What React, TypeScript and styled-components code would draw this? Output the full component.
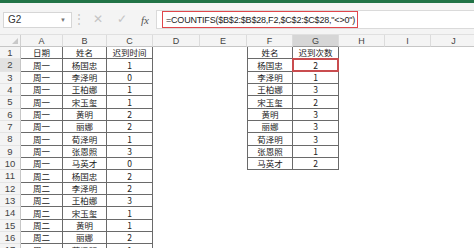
import styled, { createGlobalStyle } from "styled-components";

const GlobalStyle = createGlobalStyle`
  html, body {
    margin: 0;
    padding: 0;
    background: #ffffff;
  }
  body {
    font-family: "Noto Sans CJK SC", "Liberation Sans", sans-serif;
    overflow: hidden;
  }
`;

const Window = styled.div`
  width: 474px;
  height: 248px;
  overflow: hidden;
  display: flex;
  flex-direction: column;
  background: #ffffff;
`;

const TitleStrip = styled.div`
  height: 3px;
  flex-shrink: 0;
  background: #217346;
`;

const FormulaBar = styled.div`
  height: 32px;
  flex-shrink: 0;
  box-sizing: border-box;
  display: flex;
  align-items: center;
  padding: 2px 0 0 3px;
  background: #f4f4f4;
  border-bottom: 1px solid #e0e0e0;
`;

const NameBox = styled.div`
  width: 69px;
  height: 16px;
  box-sizing: border-box;
  display: flex;
  align-items: center;
  justify-content: space-between;
  padding: 0 5px 0 4px;
  background: #ffffff;
  border: 1px solid #d6d6d6;
  font-family: "Liberation Sans", sans-serif;
  font-size: 10px;
  color: #333;
`;

const Caret = styled.span`
  font-size: 6px;
  color: #777;
`;

const ToolGroup = styled.div`
  display: flex;
  align-items: center;
  height: 16px;
`;

const Tool = styled.span<{ $w: number; $dark?: boolean }>`
  width: ${(p) => p.$w}px;
  text-align: center;
  font-family: "Liberation Serif", serif;
  font-size: ${(p) => (p.$dark ? 11 : 12)}px;
  font-style: ${(p) => (p.$dark ? "italic" : "normal")};
  color: ${(p) => (p.$dark ? "#555" : "#c4c4c4")};
`;

const FormulaInput = styled.div`
  flex: 1;
  height: 19px;
  box-sizing: border-box;
  display: flex;
  align-items: center;
  padding-left: 5px;
  background: #ffffff;
  border: 1px solid #dadada;
  border-right: none;
`;

const Highlight = styled.div`
  height: 17px;
  width: 196px;
  box-sizing: border-box;
  display: flex;
  align-items: center;
  padding-left: 3px;
  border: 1.5px solid #e0464b;
  font-family: "Liberation Sans", sans-serif;
  font-size: 9px;
  letter-spacing: -0.2px;
  color: #222;
  white-space: nowrap;
`;

const Sheet = styled.div`
  display: grid;
  grid-template-columns: 21px 42px 44px 46px 47px 47px 46px 46px 46px 46px 46px;
  grid-template-rows: 12px;
  grid-auto-rows: 12.33px;
`;

const Corner = styled.div`
  position: relative;
  box-sizing: border-box;
  background: #f4f4f4;
  border-right: 1px solid #d0d0d0;
  border-bottom: 1px solid #c6c6c6;
  &::after {
    content: "";
    position: absolute;
    right: 2px;
    bottom: 2px;
    border-style: solid;
    border-width: 0 0 6px 6px;
    border-color: transparent transparent #c8c8c8 transparent;
  }
`;

const ColHeader = styled.div<{ $active?: boolean }>`
  box-sizing: border-box;
  display: flex;
  align-items: center;
  justify-content: center;
  background: ${(p) => (p.$active ? "#d6d6d6" : "#f4f4f4")};
  border-right: 1px solid #dcdcdc;
  border-bottom: 1px solid ${(p) => (p.$active ? "#9a9a9a" : "#c6c6c6")};
  font-family: "Liberation Sans", sans-serif;
  font-size: 9px;
  color: #444;
`;

const RowHeader = styled.div<{ $active?: boolean }>`
  box-sizing: border-box;
  display: flex;
  align-items: center;
  justify-content: center;
  background: ${(p) => (p.$active ? "#e2e2e2" : "#f4f4f4")};
  border-right: 1px solid #c6c6c6;
  border-bottom: 1px solid #e4e4e4;
  font-family: "Liberation Sans", sans-serif;
  font-size: 9.5px;
  color: #444;
`;

const Cell = styled.div<{ $boxed?: boolean; $left?: boolean; $sel?: boolean }>`
  position: relative;
  box-sizing: border-box;
  display: flex;
  align-items: center;
  justify-content: center;
  overflow: visible;
  white-space: nowrap;
  font-size: 8.5px;
  line-height: 1;
  color: #222;
  border-right: 1px solid ${(p) => (p.$boxed ? "#6a6a6a" : "transparent")};
  border-bottom: 1px solid ${(p) => (p.$boxed ? "#6a6a6a" : "transparent")};
  border-left: ${(p) => (p.$left ? "1px solid #6a6a6a" : "none")};
  &::after {
    content: "";
    display: ${(p) => (p.$sel ? "block" : "none")};
    position: absolute;
    inset: -1px -1px -1px -1px;
    border: 2px solid #c94c4f;
  }
`;

const columns = ["A", "B", "C", "D", "E", "F", "G", "H", "I", "J"];

const log: [string, string, string][] = [
  ["日期", "姓名", "迟到时间"],
  ["周一", "杨国忠", "1"],
  ["周一", "李泽明", "0"],
  ["周一", "王柏娜", "1"],
  ["周一", "宋玉玺", "1"],
  ["周一", "黄明", "2"],
  ["周一", "丽娜", "2"],
  ["周一", "荀泽明", "1"],
  ["周一", "张恩照", "3"],
  ["周一", "马英才", "0"],
  ["周二", "杨国忠", "2"],
  ["周二", "李泽明", "2"],
  ["周二", "王柏娜", "3"],
  ["周二", "宋玉玺", "1"],
  ["周二", "黄明", "1"],
  ["周二", "丽娜", "2"],
  ["周二", "荀泽明", "1"],
];

const summary: [string, string][] = [
  ["姓名", "迟到次数"],
  ["杨国忠", "2"],
  ["李泽明", "1"],
  ["王柏娜", "3"],
  ["宋玉玺", "2"],
  ["黄明", "3"],
  ["丽娜", "3"],
  ["荀泽明", "3"],
  ["张恩照", "1"],
  ["马英才", "2"],
];

export default function App() {
  return (
    <Window>
      <GlobalStyle />
      <TitleStrip />
      <FormulaBar>
        <NameBox>
          G2
          <Caret>▼</Caret>
        </NameBox>
        <ToolGroup>
          <Tool $w={14}>⋮</Tool>
          <Tool $w={24}>✕</Tool>
          <Tool $w={24}>✓</Tool>
          <Tool $w={22} $dark>fx</Tool>
        </ToolGroup>
        <FormulaInput>
          <Highlight>=COUNTIFS($B$2:$B$28,F2,$C$2:$C$28,"&lt;&gt;0")</Highlight>
        </FormulaInput>
      </FormulaBar>
      <Sheet>
        <Corner />
        {columns.map((c) => (
          <ColHeader key={c} $active={c === "G"}>
            {c}
          </ColHeader>
        ))}
        {log.map((row, i) => {
          const s = summary[i];
          return [
            <RowHeader key={`h${i}`} $active={i === 1}>
              {i + 1}
            </RowHeader>,
            <Cell key={`a${i}`} $boxed>{row[0]}</Cell>,
            <Cell key={`b${i}`} $boxed>{row[1]}</Cell>,
            <Cell key={`c${i}`} $boxed>{row[2]}</Cell>,
            <Cell key={`d${i}`} />,
            <Cell key={`e${i}`} />,
            <Cell key={`f${i}`} $boxed={!!s} $left={!!s}>{s ? s[0] : ""}</Cell>,
            <Cell key={`g${i}`} $boxed={!!s} $sel={i === 1}>{s ? s[1] : ""}</Cell>,
            <Cell key={`h2${i}`} />,
            <Cell key={`i${i}`} />,
            <Cell key={`j${i}`} />,
          ];
        })}
      </Sheet>
    </Window>
  );
}
